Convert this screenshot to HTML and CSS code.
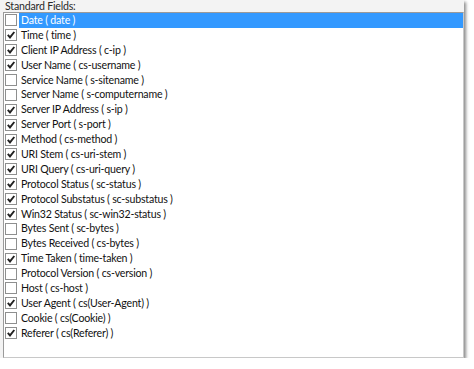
FILE: index.html
```html
<!DOCTYPE html>
<html lang="en">

<head>
    <meta charset="UTF-8">
    <title>Standard Fields</title>
    <link rel="stylesheet" href="styles.css">
</head>

<body>
    <div class="panel">
        <div class="panel-title">Standard Fields:</div>
        <ul class="field-list">
            <li class="field selected"><span class="box"></span><span class="name">Date ( date )</span></li>
            <li class="field checked"><span class="box"></span><span class="name">Time ( time )</span></li>
            <li class="field checked"><span class="box"></span><span class="name">Client IP Address ( c-ip )</span></li>
            <li class="field checked"><span class="box"></span><span class="name">User Name ( cs-username )</span></li>
            <li class="field"><span class="box"></span><span class="name">Service Name ( s-sitename )</span></li>
            <li class="field"><span class="box"></span><span class="name">Server Name ( s-computername )</span></li>
            <li class="field checked"><span class="box"></span><span class="name">Server IP Address ( s-ip )</span></li>
            <li class="field checked"><span class="box"></span><span class="name">Server Port ( s-port )</span></li>
            <li class="field checked"><span class="box"></span><span class="name">Method ( cs-method )</span></li>
            <li class="field checked"><span class="box"></span><span class="name">URI Stem ( cs-uri-stem )</span></li>
            <li class="field checked"><span class="box"></span><span class="name">URI Query ( cs-uri-query )</span></li>
            <li class="field checked"><span class="box"></span><span class="name">Protocol Status ( sc-status )</span></li>
            <li class="field checked"><span class="box"></span><span class="name">Protocol Substatus ( sc-substatus )</span></li>
            <li class="field checked"><span class="box"></span><span class="name">Win32 Status ( sc-win32-status )</span></li>
            <li class="field"><span class="box"></span><span class="name">Bytes Sent ( sc-bytes )</span></li>
            <li class="field"><span class="box"></span><span class="name">Bytes Received ( cs-bytes )</span></li>
            <li class="field checked"><span class="box"></span><span class="name">Time Taken ( time-taken )</span></li>
            <li class="field"><span class="box"></span><span class="name">Protocol Version ( cs-version )</span></li>
            <li class="field"><span class="box"></span><span class="name">Host ( cs-host )</span></li>
            <li class="field checked"><span class="box"></span><span class="name">User Agent ( cs(User-Agent) )</span></li>
            <li class="field"><span class="box"></span><span class="name">Cookie ( cs(Cookie) )</span></li>
            <li class="field checked"><span class="box"></span><span class="name">Referer ( cs(Referer) )</span></li>
        </ul>
    </div>
</body>

</html>
```

FILE: styles.css
```css
* {
    margin: 0;
    padding: 0;
}

body {
    background-color: #fff;
    font-family: Lato, "Noto Sans", sans-serif;
    font-size: 10.6px;
    letter-spacing: -0.2px;
    color: #111;
}

.panel {
    width: 464px;
    height: 358px;
    background-color: #f3f3f3;
    box-shadow: 2px 2px 3px rgba(0, 0, 0, 0.45);
    display: flex;
    flex-direction: column;
}

.panel-title {
    height: 12px;
    line-height: 12px;
    padding-left: 5px;
    overflow: hidden;
    color: #2a2a2a;
}

.field-list {
    list-style: none;
    flex: 1;
    margin-left: 3px;
    background-color: #fff;
    border: 1px solid #9a9a9a;
    border-right-color: #c8c8c8;
    border-bottom-color: #c8c8c8;
}

.field {
    display: flex;
    align-items: center;
    height: 14.9px;
    padding-left: 1px;
}

.field .box {
    width: 10px;
    height: 10px;
    border: 1px solid #8e8f8f;
    background-color: #fff;
    flex-shrink: 0;
    box-sizing: content-box;
}

.field.checked .box {
    background: #fff url("data:image/svg+xml,%3Csvg xmlns='http://www.w3.org/2000/svg' width='10' height='10'%3E%3Cpath d='M1.8 4.8 L4 7.4 L8.3 2' fill='none' stroke='%23222' stroke-width='1.9'/%3E%3C/svg%3E") no-repeat center;
}

.field .name {
    flex: 1;
    height: 15px;
    line-height: 15px;
    margin-left: 2px;
    padding-left: 2px;
    white-space: nowrap;
}

.field.selected .name {
    background-color: #3399ff;
    color: #fff;
}
```
